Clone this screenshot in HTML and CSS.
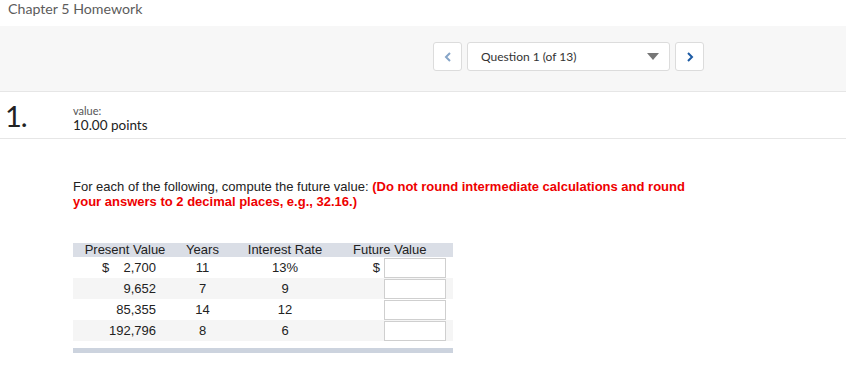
FILE: index.html
```html
<!DOCTYPE html>
<html>
<head>
<meta charset="utf-8">
<link rel="stylesheet" href="styles.css">
</head>
<body>
<div class="title">Chapter 5 Homework</div>
<div class="navband">
  <div class="nav">
    <button class="navbtn prev" aria-label="Previous">
      <svg width="8" height="10" viewBox="0 0 8 10"><path d="M6 1 L2 5 L6 9" fill="none" stroke="currentColor" stroke-width="2"/></svg>
    </button>
    <div class="select">
      <span>Question 1 (of 13)</span>
      <svg class="caret" width="12" height="7" viewBox="0 0 12 7"><path d="M0 0 H12 L6 7 Z" fill="currentColor"/></svg>
    </div>
    <button class="navbtn next" aria-label="Next">
      <svg width="8" height="10" viewBox="0 0 8 10"><path d="M2 1 L6 5 L2 9" fill="none" stroke="currentColor" stroke-width="2"/></svg>
    </button>
  </div>
</div>
<div class="qhead">
  <div class="qnum">1.</div>
  <div class="meta">
    <div class="valuelbl">value:</div>
    <div class="points">10.00 points</div>
  </div>
</div>
<div class="content">
  <p class="instr">For each of the following, compute the future value: <b class="red">(Do not round intermediate calculations and round</b><br><b class="red">your answers to 2 decimal places, e.g., 32.16.)</b></p>
  <div class="table">
    <div class="row head">
      <div class="c c1">Present Value</div>
      <div class="c c2">Years</div>
      <div class="c c3">Interest Rate</div>
      <div class="c c4h">Future Value</div>
    </div>
    <div class="row">
      <div class="c c1 pv"><span>$</span><span>2,700</span></div>
      <div class="c c2">11</div>
      <div class="c c3">13%</div>
      <div class="c c4"><span class="dol">$</span><input class="ans" type="text"></div>
    </div>
    <div class="row alt">
      <div class="c c1 pv"><span></span><span>9,652</span></div>
      <div class="c c2">7</div>
      <div class="c c3">9</div>
      <div class="c c4"><span class="dol"></span><input class="ans" type="text"></div>
    </div>
    <div class="row">
      <div class="c c1 pv"><span></span><span>85,355</span></div>
      <div class="c c2">14</div>
      <div class="c c3">12</div>
      <div class="c c4"><span class="dol"></span><input class="ans" type="text"></div>
    </div>
    <div class="row alt">
      <div class="c c1 pv"><span></span><span>192,796</span></div>
      <div class="c c2">8</div>
      <div class="c c3">6</div>
      <div class="c c4"><span class="dol"></span><input class="ans" type="text"></div>
    </div>
    <div class="bottombar"></div>
  </div>
</div>
</body>
</html>
```

FILE: styles.css
```css
* { box-sizing: border-box; }
body {
  margin: 0;
  font-family: Lato, "Open Sans", sans-serif;
  color: #222;
  background: #fff;
}
.title {
  height: 26px;
  padding: 1px 0 0 8px;
  font-size: 14.2px;
  color: #5c5c5c;
  line-height: 16px;
}
.navband {
  height: 66px;
  background: #f7f7f7;
  border-bottom: 1px solid #e6e6e6;
  display: flex;
  justify-content: flex-end;
  align-items: flex-start;
  padding: 16px 142px 0 0;
}
.nav {
  display: flex;
  gap: 5px;
}
.navbtn {
  width: 29px;
  height: 29px;
  background: #fff;
  border: 1px solid #dcdcdc;
  border-radius: 3px;
  display: flex;
  align-items: center;
  justify-content: center;
  padding: 0;
}
.prev { color: #86a5c8; }
.next { color: #1d5ba4; }
.select {
  width: 203px;
  height: 29px;
  background: #fff;
  border: 1px solid #dcdcdc;
  border-radius: 3px;
  display: flex;
  align-items: center;
  justify-content: space-between;
  padding: 0 10px 0 13px;
  font-size: 12px;
  color: #333;
}
.caret { color: #777; }
.qhead {
  height: 47px;
  border-bottom: 1px solid #e6e6e6;
  display: flex;
  align-items: flex-start;
}
.qnum {
  width: 73px;
  padding: 8px 0 0 5px;
  font-size: 29px;
  line-height: 32px;
  color: #222;
  letter-spacing: -1px;
}
.meta {
  padding-top: 13px;
}
.valuelbl {
  font-size: 11px;
  line-height: 12px;
  color: #555;
}
.points {
  font-size: 13.5px;
  line-height: 16px;
  color: #222;
}
.content {
  padding-left: 73px;
}
.instr {
  margin: 40px 0 0 0;
  font-family: "Liberation Sans", Arial, sans-serif;
  font-size: 13px;
  line-height: 15px;
  color: #222;
  white-space: nowrap;
}
.red { color: #e00; }
.table {
  margin-top: 34px;
  width: 380px;
  font-family: "Liberation Sans", Arial, sans-serif;
  font-size: 13px;
  color: #222;
}
.row {
  display: grid;
  grid-template-columns: 104px 51px 114px 111px;
  height: 21px;
  align-items: center;
}
.row.head {
  height: 14px;
  background: #dadee6;
  line-height: 14px;
}
.row.alt { background: #f5f5f5; }
.c { text-align: center; white-space: nowrap; }
.c4h { text-align: left; padding-left: 11px; }
.pv {
  display: flex;
  justify-content: space-between;
  padding: 0 21px 0 29px;
}
.c4 {
  display: flex;
  align-items: center;
  justify-content: flex-end;
  padding-right: 7px;
  height: 21px;
}
.dol { margin-right: 4px; }
.ans {
  width: 62px;
  height: 20px;
  border: 1px solid #cfcfcf;
  background: #fff;
  margin: 0;
  padding: 0;
}
.bottombar {
  margin-top: 7px;
  height: 5px;
  background: #ccd3de;
}
```
